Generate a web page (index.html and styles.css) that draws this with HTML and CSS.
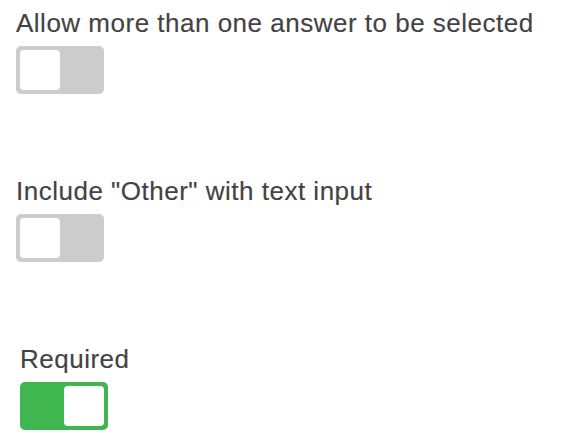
FILE: index.html
```html
<!DOCTYPE html>
<html>
<head>
<meta charset="utf-8">
<link rel="stylesheet" href="styles.css">
</head>
<body>
  <div class="setting">
    <div class="label">Allow more than one answer to be selected</div>
    <div class="toggle"><div class="knob"></div></div>
  </div>
  <div class="setting">
    <div class="label">Include "Other" with text input</div>
    <div class="toggle"><div class="knob"></div></div>
  </div>
  <div class="setting setting-required">
    <div class="label">Required</div>
    <div class="toggle toggle-on"><div class="knob"></div></div>
  </div>
</body>
</html>
```
FILE: styles.css
```css
html, body {
  background: #ffffff;
}
body {
  margin: 8px 0 0 16px;
  font-family: "Liberation Sans", Arial, sans-serif;
  color: #434343;
  display: flex;
  flex-direction: column;
  gap: 82px;
}
.setting {
  display: flex;
  flex-direction: column;
  align-items: flex-start;
  gap: 8px;
}
.setting-required {
  padding-left: 4px;
}
.label {
  font-size: 26px;
  line-height: 30px;
  letter-spacing: 0.5px;
  white-space: nowrap;
  -webkit-text-stroke: 0.15px #434343;
}
.toggle {
  box-sizing: border-box;
  width: 88px;
  height: 48px;
  padding: 4px;
  border-radius: 5px;
  background: #cccccc;
  display: flex;
  justify-content: flex-start;
}
.toggle-on {
  background: #3fb650;
  justify-content: flex-end;
}
.knob {
  width: 40px;
  height: 40px;
  border-radius: 4px;
  background: #ffffff;
}
```
